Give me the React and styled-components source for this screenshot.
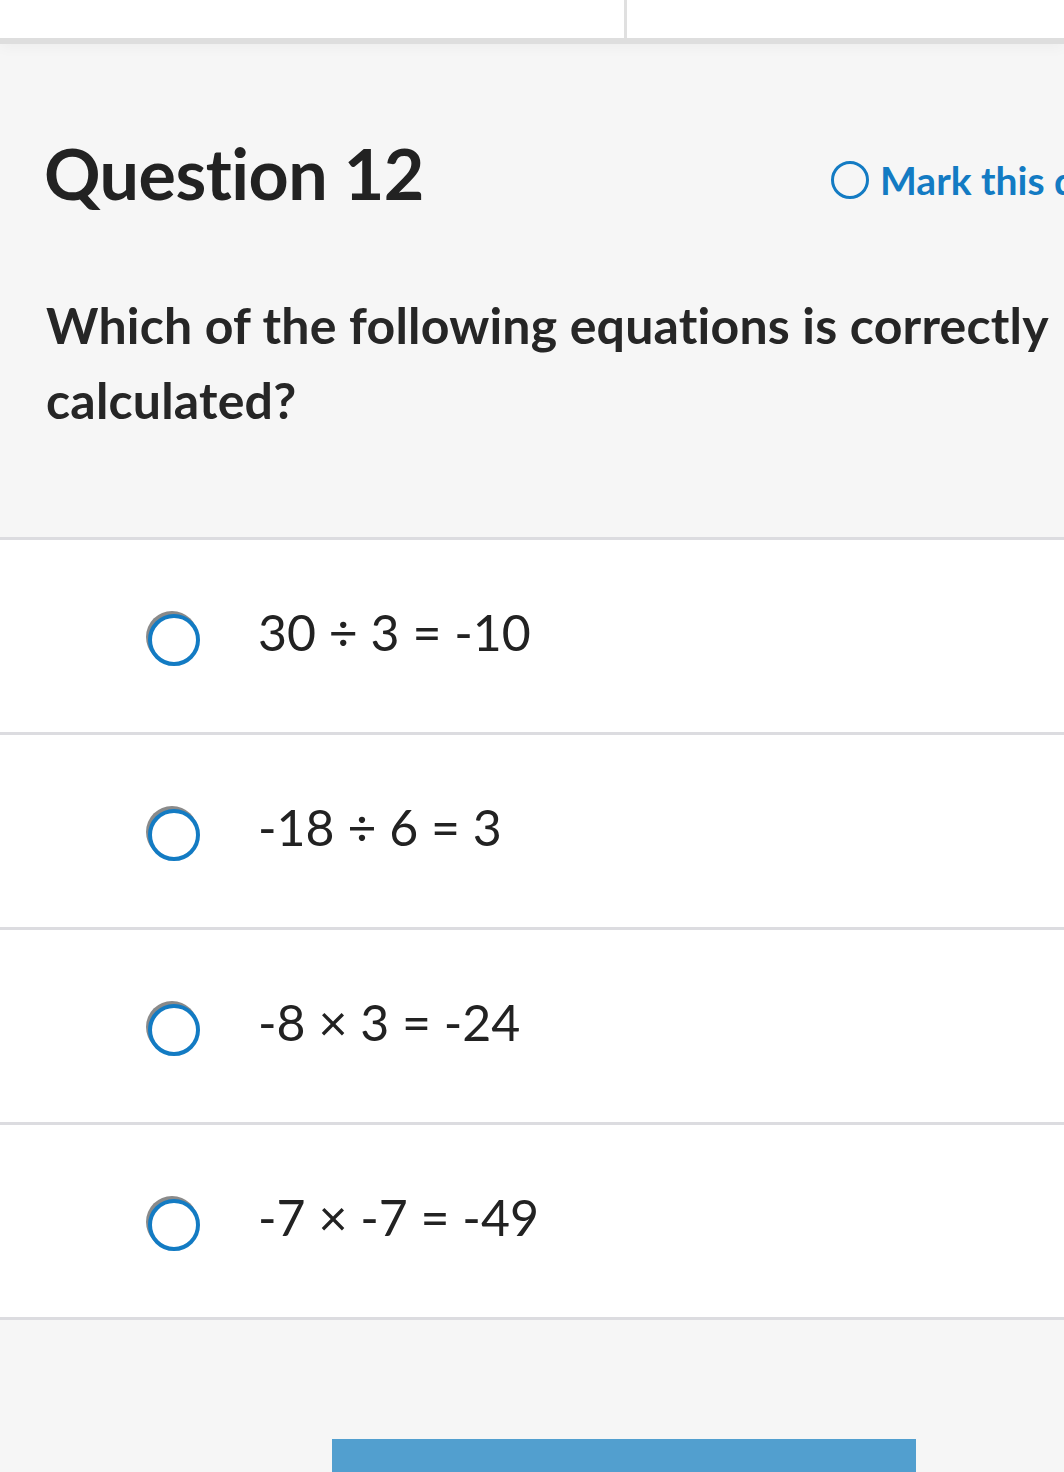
import React from 'react';
import styled, { createGlobalStyle } from 'styled-components';

const GlobalStyle = createGlobalStyle`
  html, body {
    margin: 0;
    padding: 0;
    background: #f6f6f6;
  }
  body {
    font-family: "Lato", "Helvetica Neue", Helvetica, Arial, sans-serif;
    color: #222222;
    overflow-x: hidden;
  }
`;

const Page = styled.div`
  width: 1064px;
  overflow: hidden;
  background: #f6f6f6;
`;

const TopBar = styled.div`
  display: flex;
  height: 38px;
  background: #ffffff;
  border-bottom: 6px solid #dedede;
  box-shadow: 0 4px 14px rgba(0, 0, 0, 0.035);
`;

const TopCell = styled.div`
  width: ${(p) => p.width || 'auto'};
  flex: ${(p) => (p.grow ? 1 : 'none')};
  border-right: ${(p) => (p.divider ? '3px solid #e0e0e0' : 'none')};
`;

const Header = styled.div`
  display: grid;
  grid-template-columns: 787px auto;
  align-items: center;
  padding: 94px 0 0 44px;
  width: 1300px;
`;

const Title = styled.h1`
  margin: 0;
  font-size: 70px;
  line-height: 70px;
  font-weight: 700;
  color: #222222;
  letter-spacing: -0.5px;
`;

const Mark = styled.div`
  display: flex;
  align-items: center;
  gap: 11px;
  color: #137bc3;
  font-size: 39px;
  font-weight: 700;
  white-space: nowrap;
  margin-top: 14px;
`;

const MarkCircle = styled.span`
  width: 38px;
  height: 38px;
  box-sizing: border-box;
  border: 3px solid #137bc3;
  border-radius: 50%;
  flex: none;
`;

const QuestionText = styled.p`
  margin: 80px 0 0;
  padding: 0 0 99px 46px;
  width: 1120px;
  font-size: 50px;
  line-height: 75px;
  font-weight: 700;
  letter-spacing: 0.2px;
  color: #262626;
`;

const Options = styled.div`
  background: #ffffff;
  border-top: 3px solid #dcdce0;
`;

const Option = styled.label`
  display: flex;
  align-items: center;
  height: 192px;
  border-bottom: 3px solid #dcdce0;
  padding-left: 148px;
  cursor: pointer;
`;

const Radio = styled.span`
  width: 52px;
  height: 52px;
  box-sizing: border-box;
  border: 4px solid #137bc3;
  border-radius: 50%;
  background: #ffffff;
  box-shadow: -2px -3px 0 0 #8a8a8a;
  margin-top: 8px;
  flex: none;
`;

const OptionText = styled.span`
  margin-left: 58px;
  padding-bottom: 8px;
  font-size: 50px;
  line-height: 50px;
  font-weight: 400;
  color: #222222;
`;

const Footer = styled.div`
  padding: 119px 0 0 332px;
  height: 200px;
`;

const SubmitButton = styled.button`
  display: block;
  width: 584px;
  height: 90px;
  border: none;
  background: #529fcf;
  margin: 0;
`;

const options = ['30 ÷ 3 = -10', '-18 ÷ 6 = 3', '-8 × 3 = -24', '-7 × -7 = -49'];

const App = () => (
  <Page>
    <GlobalStyle />
    <TopBar>
      <TopCell width="624px" divider />
      <TopCell grow />
    </TopBar>
    <Header>
      <Title>Question 12</Title>
      <Mark>
        <MarkCircle />
        <span>Mark this question</span>
      </Mark>
    </Header>
    <QuestionText>Which of the following equations is correctly calculated?</QuestionText>
    <Options>
      {options.map((o) => (
        <Option key={o}>
          <Radio />
          <OptionText>{o}</OptionText>
        </Option>
      ))}
    </Options>
    <Footer>
      <SubmitButton aria-label="Submit" />
    </Footer>
  </Page>
);

export default App;
